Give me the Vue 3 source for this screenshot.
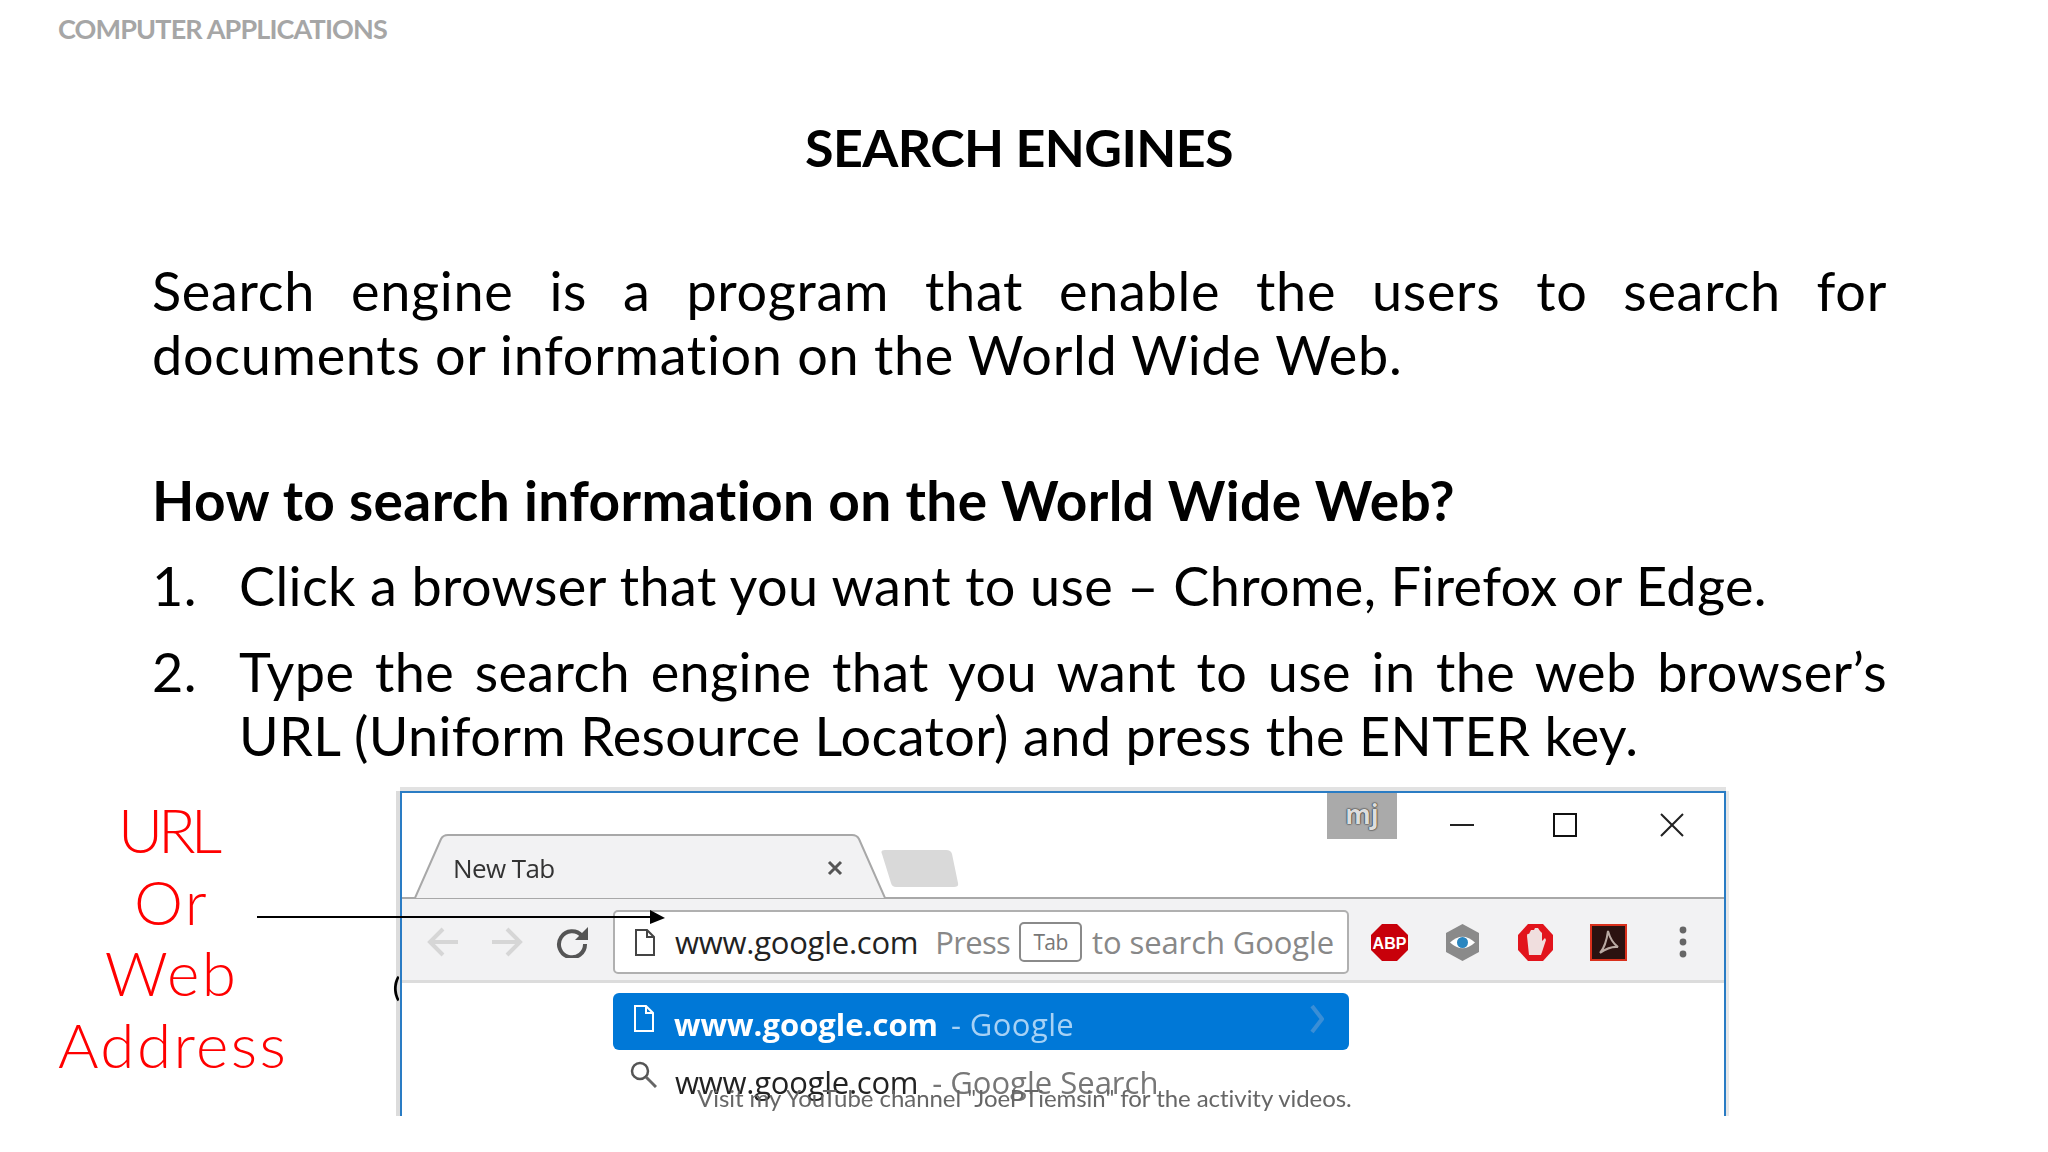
<script setup>
const steps = [
  { n: '1.', text: 'Click a browser that you want to use – Chrome, Firefox or Edge.' },
  { n: '2.', text: 'Type the search engine that you want to use in the web browser’s URL (Uniform Resource Locator) and press the ENTER key.' }
]
const labels = ['URL', 'Or', 'Web', 'Address']
</script>

<template>
  <div class="slide">
    <div class="course">COMPUTER APPLICATIONS</div>
    <h1 class="title">SEARCH ENGINES</h1>
    <p class="para">Search engine is a program that enable the users to search for documents or information on the World Wide Web.</p>
    <h2 class="how">How to search information on the World Wide Web?</h2>
    <ol class="steps">
      <li v-for="s in steps" :key="s.n" class="step">
        <span class="num">{{ s.n }}</span>
        <span class="step-text">{{ s.text }}</span>
      </li>
    </ol>
    <div class="figure">
      <div class="labels">
        <div v-for="l in labels" :key="l">{{ l }}</div>
      </div>
      <div class="shot">
        <div class="win">
          <div class="strip">
            <svg class="tabshape" width="560" height="106" viewBox="0 0 560 106">
              <path d="M0 105 H13 L39 46 Q41 42 46 42 H450 Q455 42 457 46 L483 105 H560" fill="#f2f2f3" stroke="#a8a8a8" stroke-width="2"/>
              <path d="M480 61 Q478 57 483 57 H544 Q549 57 550 61 L556 90 Q557 94 552 94 H494 Q490 94 489 90 Z" fill="#d9d9d9"/>
            </svg>
            <span class="tabtitle">New Tab</span>
            <svg class="tabclose" width="16" height="16" viewBox="0 0 16 16"><path d="M2 2 L14 14 M14 2 L2 14" stroke="#555" stroke-width="3"/></svg>
            <div class="mj">mj</div>
            <svg class="ctl ctl-min" width="24" height="24" viewBox="0 0 24 24"><path d="M0 12 H24" stroke="#222" stroke-width="2"/></svg>
            <svg class="ctl ctl-max" width="24" height="24" viewBox="0 0 24 24"><rect x="1" y="1" width="22" height="22" fill="none" stroke="#111" stroke-width="2"/></svg>
            <svg class="ctl ctl-close" width="24" height="24" viewBox="0 0 24 24"><path d="M1 1 L23 23 M23 1 L1 23" stroke="#222" stroke-width="2"/></svg>
          </div>
          <div class="toolbar">
            <svg class="nav" width="32" height="32" viewBox="0 0 32 32"><path d="M31 16 H3 M16 3 L3 16 L16 29" fill="none" stroke="#d6d6d6" stroke-width="4"/></svg>
            <svg class="nav nav-fwd" width="32" height="32" viewBox="0 0 32 32"><path d="M1 16 H29 M16 3 L29 16 L16 29" fill="none" stroke="#d6d6d6" stroke-width="4"/></svg>
            <svg class="nav nav-reload" width="32" height="32" viewBox="0 0 32 32"><path d="M26 10 A13 13 0 1 0 29 18" fill="none" stroke="#555" stroke-width="4"/><path d="M32 1 V14 H19 Z" fill="#555"/></svg>
            <div class="omni">
              <svg class="page" width="20" height="27" viewBox="0 0 20 27"><path d="M1 1 H12 L19 8 V26 H1 Z M12 1 V8 H19" fill="none" stroke="#444" stroke-width="2"/></svg>
              <span class="url">www.google.com</span>
              <span class="hint hint-press">Press</span>
              <span class="key">Tab</span>
              <span class="hint">to search Google</span>
            </div>
            <svg class="ext ext-abp" width="37" height="37" viewBox="0 0 37 37"><path d="M11 0 H26 L37 11 V26 L26 37 H11 L0 26 V11 Z" fill="#c8000a"/><text x="18.5" y="25" text-anchor="middle" class="abp">ABP</text></svg>
            <svg class="ext" width="37" height="37" viewBox="0 0 37 37"><path d="M18.5 0 L35 9 V28 L18.5 37 L2 28 V9 Z" fill="#8a8a8a"/><path d="M6 18.5 Q18.5 7 31 18.5 Q18.5 30 6 18.5 Z" fill="#fff"/><circle cx="18.5" cy="18.5" r="5.5" fill="#2a86c0"/></svg>
            <svg class="ext" width="37" height="37" viewBox="0 0 37 37"><path d="M11 0 H26 L36 11 V26 L26 37 H11 L1 26 V11 Z" fill="#e2141c"/><path d="M12 31 L10 12 Q10 9 12 10 L14 6 H17 L18 4 H21 L23 7 L25 9 V17 L28 14 L29 16 L24 31 Z" fill="#f0dede"/></svg>
            <svg class="ext" width="37" height="37" viewBox="0 0 37 37"><rect x="1" y="1" width="35" height="35" fill="#2b1210" stroke="#d9301c" stroke-width="2"/><path d="M18 7 Q21 18 28 23 Q20 22 10 29 Q16 22 18 7 Z" fill="none" stroke="#b9a9a2" stroke-width="2"/></svg>
            <svg class="dots" width="8" height="32" viewBox="0 0 8 32"><circle cx="4" cy="4" r="3.4" fill="#666"/><circle cx="4" cy="16" r="3.4" fill="#666"/><circle cx="4" cy="28" r="3.4" fill="#666"/></svg>
          </div>
          <div class="sel">
            <svg class="page sel-page" width="20" height="27" viewBox="0 0 20 27"><path d="M1 1 H12 L19 8 V26 H1 Z M12 1 V8 H19" fill="none" stroke="#fff" stroke-width="2"/></svg>
            <span class="url sel-url">www.google.com</span>
            <span class="sel-dash">- Google</span>
            <svg class="chev" width="14" height="30" viewBox="0 0 14 30"><path d="M2 2 L12 15 L2 28" fill="none" stroke="#3a8ed6" stroke-width="4"/></svg>
          </div>
          <div class="row2">
            <svg class="mag" width="27" height="27" viewBox="0 0 27 27"><circle cx="10" cy="10" r="8" fill="none" stroke="#555" stroke-width="2.5"/><path d="M16 16 L26 26" stroke="#666" stroke-width="3"/></svg>
            <span class="url">www.google.com</span>
            <span class="row2-dash">- Google Search</span>
          </div>
        </div>
        <span class="stray">(</span>
        <svg class="arrow" width="408" height="16" viewBox="0 0 408 16"><path d="M0 7 H396" stroke="#000" stroke-width="2"/><path d="M393 0 L408 8 L393 14 Z" fill="#000"/></svg>
        <div class="caption">Visit my YouTube channel "JoePTiemsin" for the activity videos.</div>
      </div>
    </div>
  </div>
</template>

<style scoped>
.slide {
  width: 2048px;
  height: 1152px;
  background: #fff;
  overflow: hidden;
  font-family: "Lato", "Liberation Sans", sans-serif;
  color: #000;
  box-sizing: border-box;
  padding-top: 12px;
}
.course {
  margin-left: 58px;
  font-size: 27px;
  line-height: 34px;
  font-weight: 700;
  color: #a6a6a6;
  letter-spacing: -0.85px;
}
.title {
  margin: 71px 0 0;
  height: 60px;
  text-align: center;
  font-size: 52px;
  line-height: 60px;
  font-weight: 700;
  letter-spacing: -0.6px;
  padding-right: 10px;
}
.para, .how, .steps { margin-left: 152px; width: 1735px; }
.para {
  margin-top: 82px;
  margin-bottom: 0;
  font-size: 54px;
  line-height: 64px;
  text-align: justify;
  letter-spacing: 0.7px;
}
.how {
  margin-top: 81px;
  margin-bottom: 0;
  font-size: 55px;
  line-height: 64px;
  font-weight: 700;
  letter-spacing: 0.4px;
}
.steps {
  list-style: none;
  padding: 0;
  margin-top: 22px;
  margin-bottom: 0;
  display: flex;
  flex-direction: column;
  gap: 22px;
}
.step {
  display: flex;
  font-size: 54px;
  line-height: 64px;
  letter-spacing: 0.37px;
}
.num { width: 87px; flex: none; }
.step-text { flex: 1; text-align: justify; }
.figure {
  display: flex;
  margin-top: 23px;
  margin-left: 58px;
}
.labels {
  width: 227px;
  margin-right: 115px;
  padding-top: 3px;
  text-align: center;
  font-size: 62px;
  line-height: 71.5px;
  font-weight: 300;
  color: #f00;
  letter-spacing: 2.4px;
}
.labels > div:first-child { letter-spacing: -5px; padding-right: 8px; }
.shot {
  position: relative;
  width: 1326px;
  height: 325px;
}
.win {
  box-sizing: border-box;
  width: 1326px;
  height: 325px;
  border: 2px solid #2a7cc4;
  border-bottom: 0;
  overflow: hidden;
  background: #fff;
  box-shadow: 0 -4px 0 #e2e2e2, -4px 0 0 #dcdcdc, 3px 0 0 #e8e8e8;
  filter: blur(0.45px);
  font-family: "Open Sans", "Liberation Sans", sans-serif;
}
.strip {
  position: relative;
  height: 106px;
  box-sizing: border-box;
  border-bottom: 2px solid #a8a8a8;
  display: flex;
  justify-content: flex-end;
  align-items: flex-start;
  padding-right: 40px;
}
.tabshape { position: absolute; left: 0; top: 0; }
.tabtitle {
  position: absolute;
  left: 51px;
  top: 57px;
  font-size: 26px;
  line-height: 36px;
  color: #333;
  letter-spacing: -0.6px;
}
.tabclose { position: absolute; left: 425px; top: 67px; }
.mj {
  width: 70px;
  height: 46px;
  margin-right: 53px;
  background: #aaa;
  color: #ddd;
  font-weight: 700;
  text-shadow: 0 0 1px #111, 0 0 2px #222;
  font-size: 26px;
  line-height: 42px;
  text-align: center;
}
.ctl { flex: none; margin-top: 20px; }
.ctl-max { margin-left: 79px; }
.ctl-close { margin-left: 83px; }
.toolbar {
  height: 84px;
  box-sizing: border-box;
  background: #f2f2f3;
  border-bottom: 3px solid #dcdcdc;
  display: flex;
  align-items: center;
  padding-left: 25px;
  padding-top: 5px;
}
.nav { flex: none; }
.nav-fwd { margin-left: 32px; }
.nav-reload { margin-left: 33px; }
.omni {
  flex: none;
  box-sizing: border-box;
  width: 736px;
  height: 64px;
  margin-left: 25px;
  background: #fff;
  border: 2px solid #b0b0b0;
  border-radius: 5px;
  display: flex;
  align-items: center;
  padding-left: 20px;
  white-space: nowrap;
}
.page { flex: none; }
.url {
  margin-left: 20px;
  font-size: 31px;
  color: #222;
  letter-spacing: -0.25px;
}
.hint {
  font-size: 31px;
  color: #888;
  letter-spacing: -0.1px;
  margin-left: 19px;
}
.hint-press { letter-spacing: -0.7px; margin-left: 17px; }
.key {
  box-sizing: border-box;
  width: 63px;
  height: 40px;
  margin-left: 9px;
  margin-right: -9px;
  border: 2px solid #8a8a8a;
  border-radius: 5px;
  font-size: 21px;
  line-height: 36px;
  text-align: center;
  color: #777;
  letter-spacing: -0.6px;
}
.ext { flex: none; margin-left: 36px; }
.ext-abp { margin-left: 22px; }
.abp {
  font-family: "Liberation Sans", sans-serif;
  font-size: 16px;
  font-weight: 700;
  fill: #fff;
}
.dots { flex: none; margin-left: 52px; }
.sel {
  margin-top: 10px;
  margin-left: 211px;
  width: 736px;
  height: 57px;
  box-sizing: border-box;
  background: #0078d7;
  border-radius: 6px;
  display: flex;
  align-items: center;
  padding-left: 21px;
  padding-right: 25px;
}
.sel-page { margin-top: -6px; }
.sel-url {
  color: #fff;
  font-weight: 700;
  letter-spacing: 0;
  margin-top: 4px;
}
.sel-dash {
  margin-left: 13px;
  margin-top: 4px;
  font-size: 31px;
  color: #a6d1f5;
  letter-spacing: 0.4px;
  flex: 1;
}
.chev { margin-top: -6px; }
.row2 {
  margin-left: 228px;
  margin-top: 11px;
  display: flex;
  align-items: flex-start;
  white-space: nowrap;
}
.row2 .url { margin-left: 18px; margin-top: 2px; line-height: 38px; }
.row2-dash {
  margin-left: 14px;
  margin-top: 2px;
  line-height: 38px;
  font-size: 31px;
  color: #777;
  letter-spacing: 0;
}
.stray {
  position: absolute;
  left: -7px;
  top: 181px;
  font-size: 26px;
  line-height: 30px;
  color: #000;
  font-weight: 700;
  overflow: hidden;
  width: 6px;
}
.arrow { position: absolute; left: -143px; top: 119px; }
.caption {
  position: absolute;
  left: 297px;
  top: 291px;
  font-size: 24px;
  line-height: 32px;
  color: #666;
  white-space: nowrap;
  letter-spacing: -0.05px;
}
</style>
